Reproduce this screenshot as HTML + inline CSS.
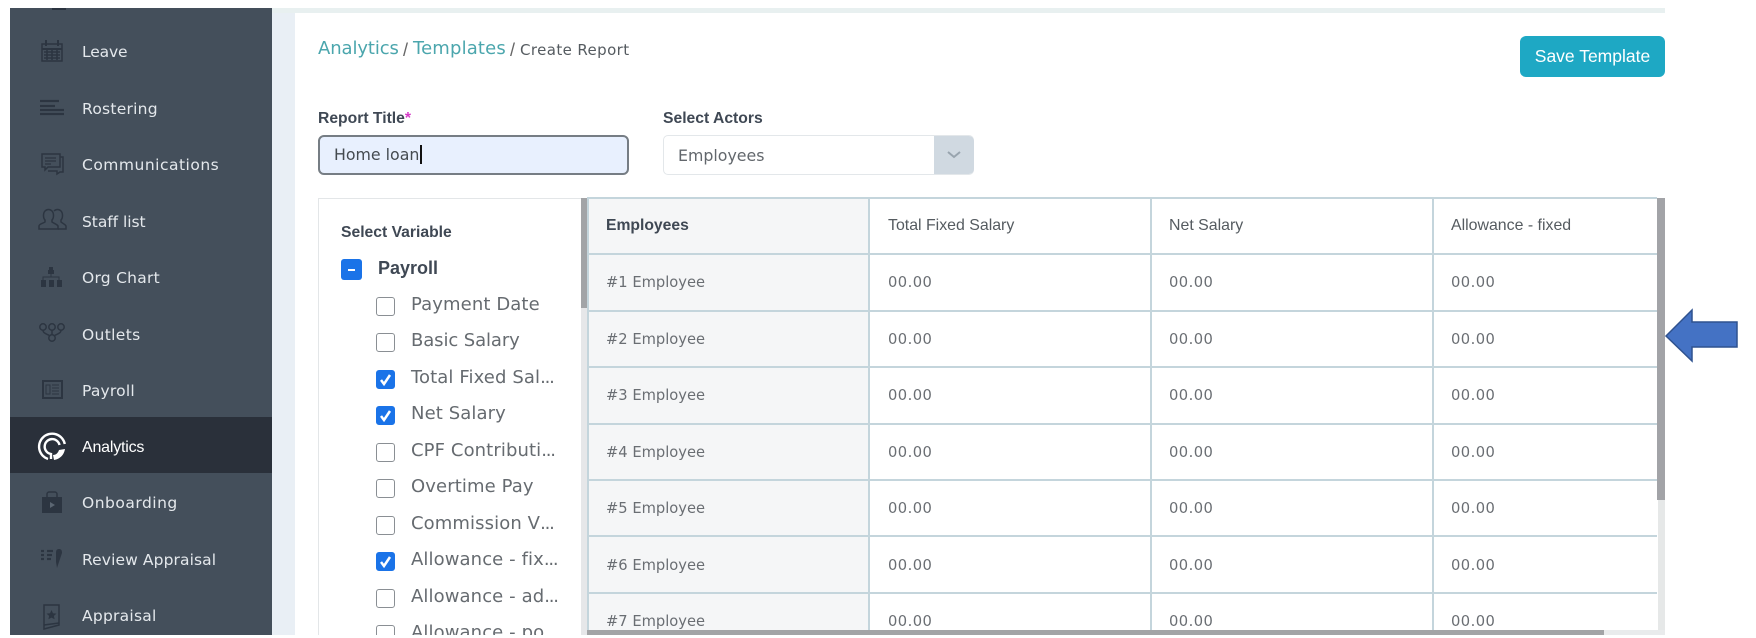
<!DOCTYPE html>
<html><head><meta charset="utf-8"><style>
*{box-sizing:border-box}
html,body{margin:0;padding:0;background:#fff;width:1756px;height:638px;overflow:hidden}
#app{position:absolute;left:0;top:0;width:1756px;height:635px;overflow:hidden;font-family:"Liberation Sans",sans-serif}
.a{position:absolute}
.t{position:absolute;white-space:nowrap;line-height:20px;height:20px}
.nav{position:absolute;left:82px;white-space:nowrap;font-family:"DejaVu Sans",sans-serif;font-size:15.5px;line-height:20px;color:#e4e8ec;letter-spacing:.5px}
.lab{position:absolute;left:411px;font-family:"DejaVu Sans",sans-serif;font-size:18px;line-height:22px;color:#666b70;white-space:nowrap;letter-spacing:.1px}
.lab span{letter-spacing:-1.2px}
.cb{position:absolute;left:376px;width:19px;height:19px;border:1.5px solid #8a8f94;border-radius:3px;background:#fff}
.cb.on{background:#1a73e8;border-color:#1a73e8}
.cb svg{position:absolute;left:2px;top:2px}
.rowt{position:absolute;font-family:"DejaVu Sans",sans-serif;font-size:14.7px;line-height:20px;color:#6a6e73;white-space:nowrap}
.v{letter-spacing:.45px}
.h{position:absolute;background:#c4d5dc}
</style></head><body><div id="app">

<div class="a" style="left:10px;top:8px;width:262px;height:627px;background:#444f5b"></div>
<div class="a" style="left:10px;top:417px;width:262px;height:56px;background:#2a303a"></div>
<div class="a" style="left:52px;top:8px;width:14px;height:2px;background:#2b3440"></div>
<div class="a" style="left:272px;top:8px;width:23px;height:627px;background:#e9eff5"></div>
<div class="a" style="left:272px;top:8px;width:1393px;height:5px;background:#e8f0f0"></div>

<div class="nav" style="top:42px;letter-spacing:-.15px">Leave</div>
<div class="nav" style="top:99px;letter-spacing:.25px">Rostering</div>
<div class="nav" style="top:155px">Communications</div>
<div class="nav" style="top:212px;letter-spacing:-.05px">Staff list</div>
<div class="nav" style="top:268px;letter-spacing:.25px">Org Chart</div>
<div class="nav" style="top:325px;letter-spacing:.35px">Outlets</div>
<div class="nav" style="top:381px;letter-spacing:.2px">Payroll</div>
<div class="nav" style="top:438px;font-family:'Liberation Sans',sans-serif;font-size:16px;color:#fff;letter-spacing:-.2px">Analytics</div>
<div class="nav" style="top:493px">Onboarding</div>
<div class="nav" style="top:550px;letter-spacing:.1px">Review Appraisal</div>
<div class="nav" style="top:606px;letter-spacing:.25px">Appraisal</div>

<svg class="a" style="left:0;top:0" width="80" height="635" viewBox="0 0 80 635" fill="none" stroke="#2c3541" stroke-width="1.5">
<rect x="42" y="44" width="20" height="17"/><path d="M42 49h20M46 40v6M58 40v6" stroke-width="2"/><path d="M44 52h16M44 55h16M44 58h16M47 50v10M52 50v10M57 50v10" stroke-width="1.6"/>
<path d="M40 101h19M40 106h15M40 110h24M40 114h24" stroke-width="2.2"/>
<path d="M42 154h18v13H48l-3 3v-3h-3z"/><path d="M60 157h3v15h-3l-3 2v-3h-9"/><path d="M45 158h11M45 161h11M45 164h6" stroke-width="1.2"/>
<path d="M39 229v-3c0-2 5-3 6-4v-2c-2-2-2-7 0-9 2-2 5-2 7 0 2 2 2 7 0 9v2c1 1 5 2 6 4v3z"/><path d="M54 211c2-2 5-2 7 0 2 2 2 7 0 9v2c1 1 4 2 5 4v3h-8"/>
<g fill="#2c3541" stroke="none"><path d="M49 267h4v3h1v4h-6v-4h1z"/><path d="M41 280h5v7h-5zM49 280h5v7h-5zM57 280h5v7h-5z"/></g><path d="M51 274v3M43 280v-3h16v3" stroke-width="1"/>
<circle cx="43" cy="327" r="3.2"/><circle cx="52" cy="327" r="3.2"/><circle cx="61" cy="327" r="3.2"/><circle cx="52" cy="338" r="3.2"/><path d="M43 330c0 4 5 4 7 6M61 330c0 4-5 4-7 6M52 330v5"/>
<rect x="43" y="381" width="19" height="17" stroke-width="2"/><path d="M46 385h4v9h-4zM52 385h7M52 388h7M52 391h7M52 394h7" stroke-width="1"/>
<path d="M47 497v-3c0-1 1-2 2-2h6c1 0 2 1 2 2v3"/><rect x="42" y="497" width="20" height="16" fill="#2c3541" stroke="none"/><path d="M50 502l5 3-5 3z" fill="#5b6672" stroke="none"/>
<path d="M41 551h3M41 555h3M41 559h3M47 551h6M47 555h5M47 559h4" stroke-width="2.2"/><path d="M59 549c2 0 3 1 3 4l-3 9-2 6-1-6 0-9c0-3 1-4 3-4z" fill="#2c3541" stroke="none"/>
<path d="M44 605h15v20l-15 4z"/><path d="M44 625l15-2"/><path d="M51.500 610l1.500 3.200 3.500.4-2.600 2.300.7 3.400-3.100-1.700-3.100 1.700.7-3.400-2.600-2.300 3.500-.4z" fill="#2c3541" stroke="none"/>
</svg>
<svg class="a" style="left:36px;top:428px" width="32" height="34" viewBox="0 0 32 34" fill="none" stroke="#fff" stroke-width="2.400">
<path d="M12 31A13 13 0 1 1 28.800 16"/><path d="M15 31v-5A7.500 7.500 0 1 1 23.500 17"/>
<path d="M29 21C28 27 24 31 18 32L17 27C20 27 22 25 23 22z" fill="#fff" stroke="none"/>
</svg>

<div class="t" style="left:318px;top:39px;font-family:'DejaVu Sans',sans-serif;font-size:18px;color:#4ba6ad;letter-spacing:-.1px">Analytics</div>
<div class="t" style="left:403px;top:40px;font-size:18px;color:#666">/</div>
<div class="t" style="left:413px;top:39px;font-family:'DejaVu Sans',sans-serif;font-size:18px;color:#4ba6ad;letter-spacing:.15px">Templates</div>
<div class="t" style="left:510px;top:40px;font-size:18px;color:#666">/</div>
<div class="t" style="left:520px;top:40px;font-family:'DejaVu Sans',sans-serif;font-size:15px;color:#555b60;letter-spacing:.4px">Create Report</div>

<div class="a" style="left:1520px;top:36px;width:145px;height:41px;background:#1ea8c4;border-radius:6px;color:#fff;font-size:17.500px;line-height:41px;text-align:center">Save Template</div>

<div class="t" style="left:318px;top:109px;font-size:15.700px;font-weight:bold;color:#3f4854">Report Title<span style="color:#d63bc8">*</span></div>
<div class="a" style="left:318px;top:135px;width:311px;height:40px;background:#e8f0fe;border:2px solid #767d84;border-radius:6px"></div>
<div class="t" style="left:334px;top:145px;font-family:'DejaVu Sans',sans-serif;font-size:15.800px;color:#444a50">Home loan</div>
<div class="a" style="left:420px;top:145px;width:1.500px;height:19px;background:#111"></div>
<div class="t" style="left:663px;top:109px;font-size:15.700px;font-weight:bold;color:#3f4854">Select Actors</div>
<div class="a" style="left:663px;top:135px;width:311px;height:40px;background:#fff;border:1px solid #e3e7ea;border-radius:5px"></div>
<div class="a" style="left:934px;top:136px;width:40px;height:38px;background:#d0d9e1;border-radius:0 5px 5px 0"></div>
<svg class="a" style="left:946px;top:150px" width="16" height="10" fill="none" stroke="#98a4ae" stroke-width="2"><path d="M2 2l6 5 6-5"/></svg>
<div class="t" style="left:678px;top:146px;font-family:'DejaVu Sans',sans-serif;font-size:15.800px;color:#62676c">Employees</div>

<!-- left card -->
<div class="a" style="left:318px;top:198px;width:270px;height:437px;border-left:1.500px solid #e3e6e8;border-top:1.500px solid #e3e6e8"></div>
<div class="a" style="left:581px;top:198px;width:6px;height:437px;background:#e6e7e9"></div>
<div class="a" style="left:581px;top:198px;width:7px;height:110px;background:#a2a4a7"></div>
<div class="t" style="left:341px;top:223px;font-size:15.700px;font-weight:bold;color:#3f4854">Select Variable</div>
<div class="a" style="left:341px;top:259px;width:21px;height:21px;background:#1a73e8;border-radius:3px"></div>
<div class="a" style="left:348px;top:269px;width:7px;height:2px;background:#fff"></div>
<div class="t" style="left:378px;top:258px;font-size:18px;font-weight:bold;color:#3f4854">Payroll</div>

<div class="cb" style="top:297px"></div><div class="lab" style="top:294px">Payment Date</div>
<div class="cb" style="top:333px"></div><div class="lab" style="top:330px;letter-spacing:-.1px">Basic Salary</div>
<div class="cb on" style="top:370px"><svg width="13" height="13" fill="none" stroke="#fff" stroke-width="2.500"><path d="M2 7l3 4 6-9"/></svg></div><div class="lab" style="top:367px">Total Fixed Sal<span>...</span></div>
<div class="cb on" style="top:406px"><svg width="13" height="13" fill="none" stroke="#fff" stroke-width="2.500"><path d="M2 7l3 4 6-9"/></svg></div><div class="lab" style="top:403px">Net Salary</div>
<div class="cb" style="top:443px"></div><div class="lab" style="top:440px">CPF Contributi<span>...</span></div>
<div class="cb" style="top:479px"></div><div class="lab" style="top:476px">Overtime Pay</div>
<div class="cb" style="top:516px"></div><div class="lab" style="top:513px">Commission V<span>...</span></div>
<div class="cb on" style="top:552px"><svg width="13" height="13" fill="none" stroke="#fff" stroke-width="2.500"><path d="M2 7l3 4 6-9"/></svg></div><div class="lab" style="top:549px">Allowance - fix<span>...</span></div>
<div class="cb" style="top:589px"></div><div class="lab" style="top:586px">Allowance - ad<span>...</span></div>
<div class="cb" style="top:625px"></div><div class="lab" style="top:622px">Allowance - po...</div>

<!-- table -->
<div class="a" style="left:588px;top:198px;width:281px;height:437px;background:#f5f6f7"></div>
<div class="h" style="left:587px;top:198px;width:2px;height:437px"></div>
<div class="h" style="left:868px;top:198px;width:2px;height:437px"></div>
<div class="h" style="left:1150px;top:198px;width:2px;height:437px"></div>
<div class="h" style="left:1432px;top:198px;width:2px;height:437px"></div>
<div class="h" style="left:587px;top:197px;width:1070px;height:2px"></div>
<div class="h" style="left:587px;top:253px;width:1070px;height:2px"></div>
<div class="h" style="left:587px;top:310px;width:1070px;height:2px"></div>
<div class="h" style="left:587px;top:366px;width:1070px;height:2px"></div>
<div class="h" style="left:587px;top:423px;width:1070px;height:2px"></div>
<div class="h" style="left:587px;top:479px;width:1070px;height:2px"></div>
<div class="h" style="left:587px;top:535px;width:1070px;height:2px"></div>
<div class="h" style="left:587px;top:592px;width:1070px;height:2px"></div>

<div class="t" style="left:606px;top:216px;font-size:15.700px;font-weight:bold;color:#3f4854">Employees</div>
<div class="t" style="left:888px;top:216px;font-size:15.900px;color:#555b60">Total Fixed Salary</div>
<div class="t" style="left:1169px;top:216px;font-size:15.900px;color:#555b60">Net Salary</div>
<div class="t" style="left:1451px;top:216px;font-size:15.900px;color:#555b60">Allowance - fixed</div>

<div class="rowt" style="left:606px;top:273px">#1 Employee</div><div class="rowt v" style="left:888px;top:273px">00.00</div><div class="rowt v" style="left:1169px;top:273px">00.00</div><div class="rowt v" style="left:1451px;top:273px">00.00</div>
<div class="rowt" style="left:606px;top:330px">#2 Employee</div><div class="rowt v" style="left:888px;top:330px">00.00</div><div class="rowt v" style="left:1169px;top:330px">00.00</div><div class="rowt v" style="left:1451px;top:330px">00.00</div>
<div class="rowt" style="left:606px;top:386px">#3 Employee</div><div class="rowt v" style="left:888px;top:386px">00.00</div><div class="rowt v" style="left:1169px;top:386px">00.00</div><div class="rowt v" style="left:1451px;top:386px">00.00</div>
<div class="rowt" style="left:606px;top:443px">#4 Employee</div><div class="rowt v" style="left:888px;top:443px">00.00</div><div class="rowt v" style="left:1169px;top:443px">00.00</div><div class="rowt v" style="left:1451px;top:443px">00.00</div>
<div class="rowt" style="left:606px;top:499px">#5 Employee</div><div class="rowt v" style="left:888px;top:499px">00.00</div><div class="rowt v" style="left:1169px;top:499px">00.00</div><div class="rowt v" style="left:1451px;top:499px">00.00</div>
<div class="rowt" style="left:606px;top:556px">#6 Employee</div><div class="rowt v" style="left:888px;top:556px">00.00</div><div class="rowt v" style="left:1169px;top:556px">00.00</div><div class="rowt v" style="left:1451px;top:556px">00.00</div>
<div class="rowt" style="left:606px;top:612px">#7 Employee</div><div class="rowt v" style="left:888px;top:612px">00.00</div><div class="rowt v" style="left:1169px;top:612px">00.00</div><div class="rowt v" style="left:1451px;top:612px">00.00</div>

<!-- scrollbars -->
<div class="a" style="left:1658px;top:198px;width:7px;height:437px;background:#e6e8e8"></div>
<div class="a" style="left:1657px;top:198px;width:8px;height:302px;background:#a2a3a7"></div>
<div class="a" style="left:587px;top:630px;width:1078px;height:5px;background:#e9ebec"></div>
<div class="a" style="left:587px;top:630px;width:1017px;height:5px;background:#a2a4a6"></div>
</div>

<svg style="position:absolute;left:1660px;top:305px" width="84" height="60" viewBox="1660 305 84 60">
<path d="M1666 336l26-26v12h45v25h-45v14z" fill="#4472c4" stroke="#2f528f" stroke-width="1.500"/>
</svg>
</body></html>
